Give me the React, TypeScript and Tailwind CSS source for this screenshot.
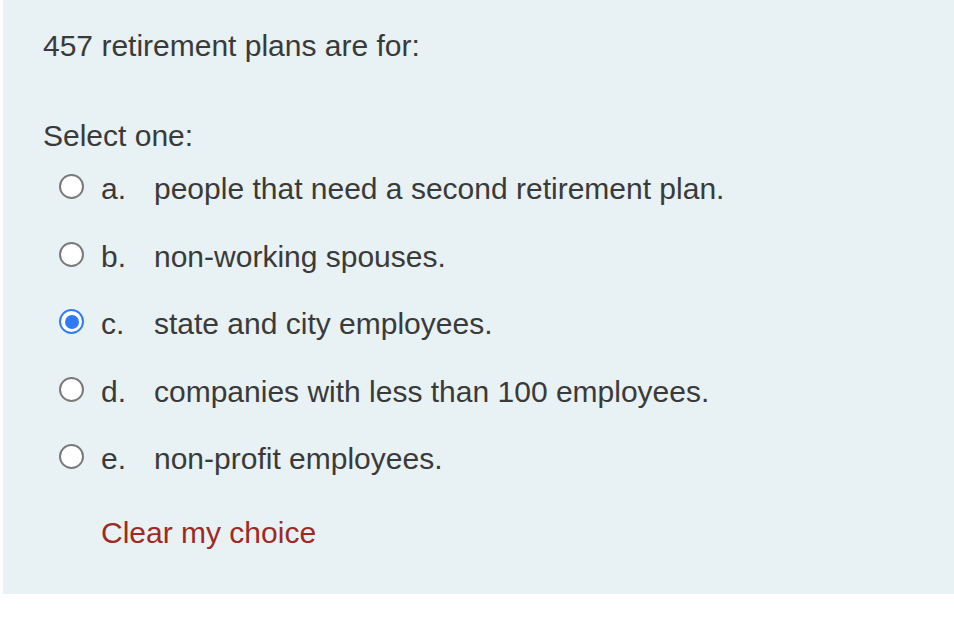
import React from "react";

const options = [
  { letter: "a.", text: "people that need a second retirement plan.", checked: false },
  { letter: "b.", text: "non-working spouses.", checked: false },
  { letter: "c.", text: "state and city employees.", checked: true },
  { letter: "d.", text: "companies with less than 100 employees.", checked: false },
  { letter: "e.", text: "non-profit employees.", checked: false },
];

function Radio({ checked }: { checked: boolean }) {
  if (checked) {
    return (
      <span className="flex h-[25px] w-[25px] shrink-0 items-center justify-center rounded-full border-[2.5px] border-[#2f7bf5] bg-white">
        <span className="h-[14px] w-[14px] rounded-full bg-[#2f7bf5]" />
      </span>
    );
  }
  return <span className="h-[25px] w-[25px] shrink-0 rounded-full border-[2px] border-[#7a7a7a] bg-white" />;
}

export default function App() {
  return (
    <div className="min-h-[624px] bg-white" style={{ fontFamily: '"Liberation Sans", Arial, sans-serif' }}>
      <div className="ml-[3px] bg-[#e8f1f4] pl-[40px] pt-[23px] pb-[39px] text-[30px] leading-[45px] text-[#3a3a3a]">
        <div>457 retirement plans are for:</div>
        <div className="mt-[45px]">Select one:</div>
        <div className="mt-[8px] flex flex-col gap-[22.5px]">
          {options.map((o) => (
            <div key={o.letter} className="flex items-center">
              <div className="ml-[16px] mr-[17px] flex -translate-y-[2px] items-center">
                <Radio checked={o.checked} />
              </div>
              <span className="w-[53px] shrink-0">{o.letter}</span>
              <span>{o.text}</span>
            </div>
          ))}
        </div>
        <div className="mt-[29px] pl-[58px] text-[#9e2a23]">Clear my choice</div>
      </div>
    </div>
  );
}
